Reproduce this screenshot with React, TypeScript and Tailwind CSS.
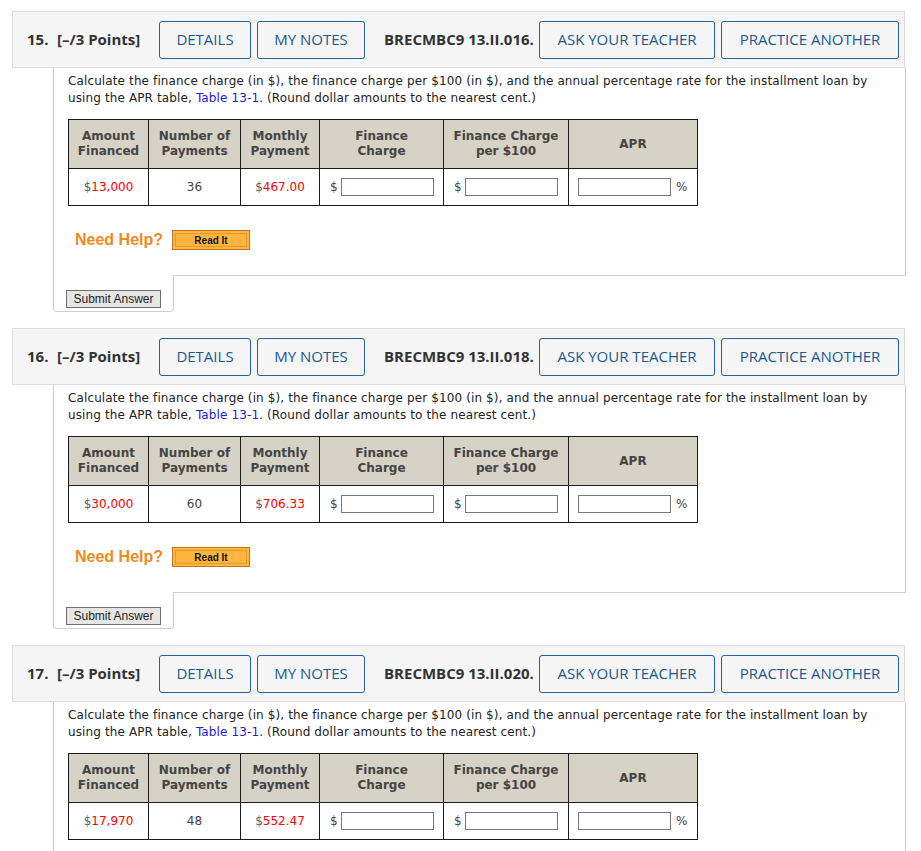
const questions = [
  { num: 15, code: 'BRECMBC9 13.II.016.', amount: '13,000', payments: '36', monthly: '467.00' },
  { num: 16, code: 'BRECMBC9 13.II.018.', amount: '30,000', payments: '60', monthly: '706.33' },
  { num: 17, code: 'BRECMBC9 13.II.020.', amount: '17,970', payments: '48', monthly: '552.47' },
];

const body = { fontFamily: '"DejaVu Sans", Verdana, sans-serif' };
const head = { fontFamily: '"Open Sans", "Noto Sans", sans-serif' };
const arial = { fontFamily: '"Liberation Sans", Arial, sans-serif' };

function HeadButton({ label, w }: { label: string; w: string }) {
  return (
    <button
      className={`h-[38px] ${w} shrink-0 rounded-[3px] border border-[#24609a] bg-transparent text-[15px] text-[#1a5890]`}
      style={head}
    >
      {label}
    </button>
  );
}

function Money({ v }: { v: string }) {
  return (
    <span>
      <span className="text-[#5a5e66]">$</span>
      <span className="text-[#ff0000]">{v}</span>
    </span>
  );
}

function Box() {
  return <span className="inline-block h-[18px] w-[93px] border border-[#777] bg-white align-middle" />;
}

function Question({ num, code, amount, payments, monthly }: (typeof questions)[number]) {
  return (
    <div className="h-[317px]">
      <div
        className="ml-[12px] flex h-[57px] w-[893px] items-center gap-[6px] border border-[#dcdcdc] bg-[#f5f5f5] text-[#333]"
        style={head}
      >
        <span className="ml-[14px] w-[24px] text-[15px] font-bold">{num}.</span>
        <span className="w-[96px] text-[15px] font-bold">[–/3 Points]</span>
        <HeadButton label="DETAILS" w="w-[92px]" />
        <HeadButton label="MY NOTES" w="w-[108px]" />
        <span className="w-[162px] shrink-0 pl-[13px] text-[15px] font-bold whitespace-nowrap">{code}</span>
        <HeadButton label="ASK YOUR TEACHER" w="w-[176px]" />
        <HeadButton label="PRACTICE ANOTHER" w="w-[178px]" />
      </div>

      <div className="ml-[53px] w-[853px]">
        <div className="border-x border-[#cfcfcf] pl-[14px] pt-[5px]">
          <p className="w-[808px] text-[12px] leading-[17px] tracking-[0.12px] text-[#222]" style={body}>
            Calculate the finance charge (in $), the finance charge per $100 (in $), and the annual percentage rate for the
            installment loan by using the APR table, <span className="text-[#2121d4]">Table 13-1</span>. (Round dollar
            amounts to the nearest cent.)
          </p>

          <table className="mt-[12px] border-collapse text-[12px]" style={body}>
            <thead>
              <tr className="h-[49px] bg-[#d6d2c6] font-bold text-[#444] leading-[15px]">
                <th className="w-[80px] border border-[#1a1a1a] font-bold">Amount<br />Financed</th>
                <th className="w-[92px] border border-[#1a1a1a] font-bold">Number of<br />Payments</th>
                <th className="w-[79px] border border-[#1a1a1a] font-bold">Monthly<br />Payment</th>
                <th className="w-[124px] border border-[#1a1a1a] font-bold">Finance<br />Charge</th>
                <th className="w-[125px] border border-[#1a1a1a] font-bold">Finance Charge<br />per $100</th>
                <th className="w-[129px] border border-[#1a1a1a] font-bold">APR</th>
              </tr>
            </thead>
            <tbody>
              <tr className="h-[37px] text-center text-[#444]">
                <td className="border border-[#1a1a1a]"><Money v={amount} /></td>
                <td className="border border-[#1a1a1a]">{payments}</td>
                <td className="border border-[#1a1a1a]"><Money v={monthly} /></td>
                <td className="border border-[#1a1a1a] pl-[10px] text-left">
                  <span className="mr-[3px]">$</span>
                  <Box />
                </td>
                <td className="border border-[#1a1a1a] pl-[10px] text-left">
                  <span className="mr-[3px]">$</span>
                  <Box />
                </td>
                <td className="border border-[#1a1a1a] pl-[9px] text-left">
                  <Box />
                  <span className="ml-[5px]">%</span>
                </td>
              </tr>
            </tbody>
          </table>

          <div className="flex h-[69px] items-center pl-[7px] pb-[2px]">
            <span className="text-[16px] font-bold text-[#f08a1c]" style={arial}>
              Need Help?
            </span>
            <button
              className="ml-[9px] h-[20px] w-[78px] border border-[#c8741a] bg-[#ffb53f] p-[2px]"
              style={arial}
            >
              <span className="flex h-full w-full items-center justify-center border border-[#e59a2c] pt-[1px] text-[10px] font-bold text-[#111]">
                Read It
              </span>
            </button>
          </div>
        </div>

        <div className="flex">
          <div className="h-[37px] w-[121px] rounded-b-[4px] border-x border-b border-[#cfcfcf] pl-[12px] pt-[10px]">
            <button
              className="h-[18px] w-[95px] border border-[#6f6f6f] bg-[#e6e6e6] text-[12px] leading-[16px] text-[#222]"
              style={arial}
            >
              Submit Answer
            </button>
          </div>
          <div className="h-[1px] flex-1 rounded-tr-[4px] border-r border-t border-[#cfcfcf]" />
        </div>
      </div>
    </div>
  );
}

export default function App() {
  return (
    <div className="h-[851px] w-[921px] overflow-hidden bg-white pt-[11px]">
      {questions.map((q) => (
        <Question key={q.num} {...q} />
      ))}
    </div>
  );
}
